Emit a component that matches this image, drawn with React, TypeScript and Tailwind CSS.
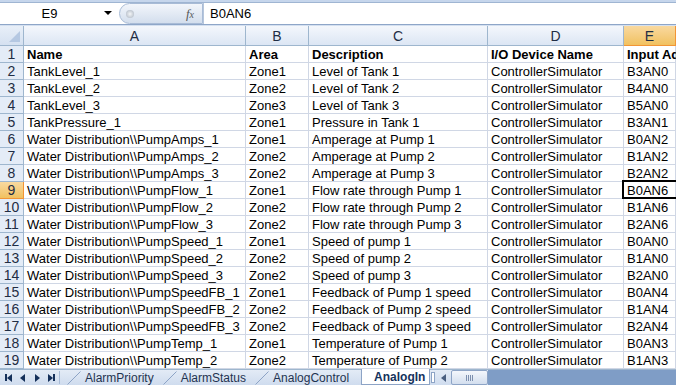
import React from 'react'

type Row = [string, string, string, string, string]

const ROWS: Row[] = [
  ['Name', 'Area', 'Description', 'I/O Device Name', 'Input Address'],
  ['TankLevel_1', 'Zone1', 'Level of Tank 1', 'ControllerSimulator', 'B3AN0'],
  ['TankLevel_2', 'Zone2', 'Level of Tank 2', 'ControllerSimulator', 'B4AN0'],
  ['TankLevel_3', 'Zone3', 'Level of Tank 3', 'ControllerSimulator', 'B5AN0'],
  ['TankPressure_1', 'Zone1', 'Pressure in Tank 1', 'ControllerSimulator', 'B3AN1'],
  ['Water Distribution\\\\PumpAmps_1', 'Zone1', 'Amperage at Pump 1', 'ControllerSimulator', 'B0AN2'],
  ['Water Distribution\\\\PumpAmps_2', 'Zone2', 'Amperage at Pump 2', 'ControllerSimulator', 'B1AN2'],
  ['Water Distribution\\\\PumpAmps_3', 'Zone2', 'Amperage at Pump 3', 'ControllerSimulator', 'B2AN2'],
  ['Water Distribution\\\\PumpFlow_1', 'Zone1', 'Flow rate through Pump 1', 'ControllerSimulator', 'B0AN6'],
  ['Water Distribution\\\\PumpFlow_2', 'Zone2', 'Flow rate through Pump 2', 'ControllerSimulator', 'B1AN6'],
  ['Water Distribution\\\\PumpFlow_3', 'Zone2', 'Flow rate through Pump 3', 'ControllerSimulator', 'B2AN6'],
  ['Water Distribution\\\\PumpSpeed_1', 'Zone1', 'Speed of pump 1', 'ControllerSimulator', 'B0AN0'],
  ['Water Distribution\\\\PumpSpeed_2', 'Zone2', 'Speed of pump 2', 'ControllerSimulator', 'B1AN0'],
  ['Water Distribution\\\\PumpSpeed_3', 'Zone2', 'Speed of pump 3', 'ControllerSimulator', 'B2AN0'],
  ['Water Distribution\\\\PumpSpeedFB_1', 'Zone1', 'Feedback of Pump 1 speed', 'ControllerSimulator', 'B0AN4'],
  ['Water Distribution\\\\PumpSpeedFB_2', 'Zone2', 'Feedback of Pump 2 speed', 'ControllerSimulator', 'B1AN4'],
  ['Water Distribution\\\\PumpSpeedFB_3', 'Zone2', 'Feedback of Pump 3 speed', 'ControllerSimulator', 'B2AN4'],
  ['Water Distribution\\\\PumpTemp_1', 'Zone1', 'Temperature of Pump 1', 'ControllerSimulator', 'B0AN3'],
  ['Water Distribution\\\\PumpTemp_2', 'Zone2', 'Temperature of Pump 2', 'ControllerSimulator', 'B1AN3'],
]

// widths include the right gridline
const COL_W = ['w-[222px] shrink-0', 'w-[63px] shrink-0', 'w-[179px] shrink-0', 'w-[136px] shrink-0', 'min-w-0 flex-1']
const COLS = ['A', 'B', 'C', 'D', 'E']
const SEL_ROW = 9
const SEL_COL = 4

const FormulaBar = () => (
  <div className="flex h-[26px] flex-col bg-[#d4e0f0]">
    <div className="h-[3px] border-b border-[#9fb5d2] bg-[#c6d6ec]" />
    <div className="flex h-[22px] items-stretch border-b border-[#8ea6c8] bg-white">
      <div className="relative flex w-[119px] items-center">
        <span className="w-full pr-[20px] text-center">E9</span>
        <span className="absolute left-[104px] top-[8px] h-0 w-0 border-x-[4px] border-t-[4px] border-x-transparent border-t-black" />
      </div>
      <div className="relative flex w-[84px] items-center rounded-l-[11px] border border-[#a8bbd6] bg-linear-to-b from-[#f3f6fb] to-[#d3deed]">
        <span className="ml-[6px] h-[8px] w-[8px] rounded-full bg-radial from-[#f4f6f8] to-[#a9b2bf]" />
        <span className="ml-auto mr-[8px] font-['Liberation_Serif',serif] text-[13px] italic text-[#55575a]">
          f<span className="text-[10px]">x</span>
        </span>
      </div>
      <div className="flex flex-1 items-center border-l border-[#b6c6dc] pl-[6px]">B0AN6</div>
    </div>
  </div>
)

const ColumnHeader = () => (
  <div className="flex h-[20px]">
    <div className="relative w-[24px] shrink-0 border-b border-r border-[#9eb6ce] bg-linear-to-b from-[#e8eff8] to-[#d5e1f1]">
      <span className="absolute bottom-[3px] right-[3px] h-0 w-0 border-b-[11px] border-l-[11px] border-b-[#b5c8e2] border-l-transparent" />
    </div>
    {COLS.map((c, i) => (
      <div
        key={c}
        className={`${COL_W[i]} flex items-center justify-center border-b border-r text-[14px] ${
          i === SEL_COL
            ? 'border-[#f29536] bg-linear-to-b from-[#f9d99f] to-[#f1c15f] text-[#1f2d44]'
            : 'border-[#9eb6ce] bg-linear-to-b from-[#f4f7fc] to-[#dce6f4] text-[#1f2d44]'
        }`}
      >
        {c}
      </div>
    ))}
  </div>
)

const DataRow = ({ row, n }: { row: Row; n: number }) => (
  <div className="flex h-[17px]">
    <div
      className={`flex w-[24px] shrink-0 items-center justify-center border-b border-r text-[14px] ${
        n === SEL_ROW
          ? 'border-[#f29536] bg-linear-to-b from-[#f9d99f] to-[#f1c15f] text-[#1f2d44]'
          : 'border-[#9eb6ce] bg-[#e4ecf7] text-[#1f2d44]'
      }`}
    >
      {n}
    </div>
    {row.map((v, i) => (
      <div
        key={i}
        className={`${COL_W[i]} relative flex items-center whitespace-nowrap border-b border-r border-[#d0d7e5] pl-[3px] ${
          i === SEL_COL ? '' : 'overflow-hidden'
        } ${n === 1 ? 'font-bold' : ''}`}
      >
        {v}
        {n === SEL_ROW && i === SEL_COL && (
          <span className="absolute -left-[2px] -top-[2px] z-10 h-[19px] w-[80px] border-2 border-black" />
        )}
      </div>
    ))}
  </div>
)

const Slant = () => (
  <svg width="14" height="15" viewBox="0 0 14 15" className="shrink-0">
    <line x1="0.5" y1="14.5" x2="13.5" y2="1.5" stroke="#8da4c6" strokeWidth="1" />
  </svg>
)

const Tab = ({ label }: { label: string }) => (
  <div className="flex items-center">
    <Slant />
    <span className="ml-[4px] mr-[9px] text-[#1f3350]">{label}</span>
  </div>
)

const NavArrow = ({ dir, bar }: { dir: 'l' | 'r'; bar?: boolean }) => (
  <div className="flex w-[15px] items-center justify-center">
    {bar && dir === 'l' && <span className="h-[7px] w-[2px] bg-[#14305a]" />}
    <span
      className={`h-0 w-0 border-y-[4px] border-y-transparent ${
        dir === 'l' ? 'border-r-[5px] border-r-[#14305a]' : 'border-l-[5px] border-l-[#14305a]'
      }`}
    />
    {bar && dir === 'r' && <span className="h-[7px] w-[2px] bg-[#14305a]" />}
  </div>
)

const SheetTabs = () => (
  <div className="flex h-[16px] items-stretch border-t border-[#9eb6ce] bg-linear-to-b from-[#e3ebf6] to-[#cfdcee] text-[12px]">
    <div className="flex w-[59px] items-center pl-[1px]">
      <NavArrow dir="l" bar />
      <NavArrow dir="l" />
      <NavArrow dir="r" />
      <NavArrow dir="r" bar />
    </div>
    <span className="my-[1px] w-[1px] bg-[#a8bbd6]" />
    <div className="flex items-center pl-[7px]">
      <Tab label="AlarmPriority" />
      <Tab label="AlarmStatus" />
      <Tab label="AnalogControl" />
    </div>
    <div className="-mt-[1px] ml-[3px] flex items-center border-x border-b border-[#8da4c6] bg-white pl-[12px] pr-[4px] font-bold text-[#15325c]">
      AnalogIn
    </div>
    <div className="my-[2px] ml-[1px] w-[4px] border border-[#8da4c6] bg-white" />
    <div className="flex w-[16px] items-center justify-center">
      <span className="h-0 w-0 border-y-[4px] border-r-[5px] border-y-transparent border-r-[#4a5f80]" />
    </div>
    <div className="flex w-[37px] items-center justify-center gap-[1px] rounded-[2px] border border-[#8da4c6] bg-linear-to-b from-[#f4f7fc] to-[#d3deee]">
      <span className="h-[6px] w-[1px] bg-[#7c8fae]" />
      <span className="h-[6px] w-[1px] bg-[#7c8fae]" />
      <span className="h-[6px] w-[1px] bg-[#7c8fae]" />
      <span className="h-[6px] w-[1px] bg-[#7c8fae]" />
    </div>
    <div className="flex-1 bg-[#7f9dc6]" />
  </div>
)

export default function App() {
  return (
    <div className="flex h-[385px] w-[676px] flex-col overflow-hidden bg-white font-['Liberation_Sans',Arial,sans-serif] text-[13px] leading-none text-black">
      <FormulaBar />
      <ColumnHeader />
      {ROWS.map((r, i) => (
        <DataRow key={i} row={r} n={i + 1} />
      ))}
      <SheetTabs />
    </div>
  )
}
